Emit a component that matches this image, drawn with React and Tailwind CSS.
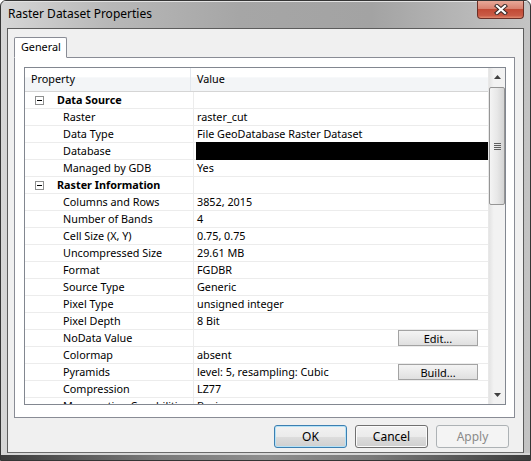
import React from 'react'

const rows = [
  { cat: 'Data Source' },
  { name: 'Raster', value: 'raster_cut' },
  { name: 'Data Type', value: 'File GeoDatabase Raster Dataset' },
  { name: 'Database', hidden: true },
  { name: 'Managed by GDB', value: 'Yes' },
  { cat: 'Raster Information' },
  { name: 'Columns and Rows', value: '3852, 2015' },
  { name: 'Number of Bands', value: '4' },
  { name: 'Cell Size (X, Y)', value: '0.75, 0.75' },
  { name: 'Uncompressed Size', value: '29.61 MB' },
  { name: 'Format', value: 'FGDBR' },
  { name: 'Source Type', value: 'Generic' },
  { name: 'Pixel Type', value: 'unsigned integer' },
  { name: 'Pixel Depth', value: '8 Bit' },
  { name: 'NoData Value', value: '', button: 'Edit...' },
  { name: 'Colormap', value: 'absent' },
  { name: 'Pyramids', value: 'level: 5, resampling: Cubic', button: 'Build...' },
  { name: 'Compression', value: 'LZ77' },
  { name: 'Mensuration Capabilities', value: 'Basic' },
]

const CloseGlyph = () => (
  <svg width="14" height="11" viewBox="0 0 14 11">
    <path d="M3 2 L11 9 M11 2 L3 9" stroke="#3a2a28" strokeWidth="4.2" strokeLinecap="square" />
    <path d="M3 2 L11 9 M11 2 L3 9" stroke="#ffffff" strokeWidth="2.2" strokeLinecap="square" />
  </svg>
)

const Row = ({ row }) => {
  if (row.cat) {
    return (
      <div className="flex shrink-0 h-[17px] border-b border-[#ececec]">
        <div className="w-[169px] flex items-center border-r border-[#ececec]">
          {/* expand box */}
          <div className="ml-[10px] w-[9px] h-[9px] border border-[#8e8f8f] flex items-center justify-center">
            <div className="w-[5px] h-px bg-[#000]" />
          </div>
          <span className="ml-[13px] font-bold leading-none">{row.cat}</span>
        </div>
        <div className="flex-1" />
      </div>
    )
  }
  return (
    <div className="flex shrink-0 h-[17px] border-b border-[#ececec]">
      <div className="w-[169px] flex items-center pl-[38px] border-r border-[#ececec] whitespace-nowrap overflow-hidden">
        <span className="leading-none">{row.name}</span>
      </div>
      <div className="flex-1 flex items-center pl-[3px] relative">
        {row.hidden ? (
          <div className="absolute left-[2px] right-0 top-[-1px] h-[18px] bg-black" />
        ) : (
          <span className="leading-none">{row.value}</span>
        )}
        {row.button && (
          <button className="ml-auto mr-[10px] w-[80px] h-[16px] self-start border border-[#a3a3a3] bg-gradient-to-b from-[#f4f4f4] to-[#e0e0e0] text-[11px] leading-none">
            {row.button}
          </button>
        )}
      </div>
    </div>
  )
}

const DlgButton = ({ children, variant }) => {
  const cls =
    variant === 'default'
      ? 'border-[#3c7fb1] shadow-[inset_0_0_0_1px_#b5e2f7] text-black'
      : variant === 'disabled'
      ? 'border-[#adb2b5] text-[#8a8a8a]'
      : 'border-[#707070] shadow-[inset_0_0_0_1px_#fbfbfb] text-black'
  return (
    <button
      className={`w-[73px] h-[23px] rounded-[3px] border text-[12px] leading-none ${cls} ${
        variant === 'disabled'
          ? 'bg-[#f4f4f4]'
          : 'bg-[linear-gradient(to_bottom,#f2f2f2_0%,#ebebeb_50%,#dddddd_51%,#cfcfcf_100%)]'
      }`}
    >
      {children}
    </button>
  )
}

export default function App() {
  return (
    <div className="w-[531px] h-[461px] bg-white font-['Noto_Sans',sans-serif] text-[10.8px] text-black">
      <div className="w-full h-full border border-[#353535] rounded-t-[6px] overflow-hidden flex flex-col bg-[linear-gradient(to_right,#d6d6d6_0%,#b8b8b8_20%,#a6a6a6_45%,#a3a3a3_70%,#bcbcbc_92%,#c4c4c4_100%)]">
        {/* title bar */}
        <div className="h-[27px] flex items-start border-t border-[#e2e2e2] shrink-0">
          <span className="ml-[7px] mt-[6px] text-[12px] leading-none text-black">Raster Dataset Properties</span>
          <div className="ml-auto mr-[6px] -mt-px w-[47px] h-[18px] rounded-b-[4px] border border-[#6b2f26] border-t-0 flex items-center justify-center bg-[linear-gradient(to_bottom,#e8a898_0%,#d98270_45%,#c24a35_50%,#c95a45_85%,#e08a70_100%)]">
            <CloseGlyph />
          </div>
        </div>

        {/* frame + client */}
        <div className="flex-1 flex px-[6px] min-h-0">
          <div className="flex-1 border border-[#5c5c5c] border-b-[#6a6a6a] bg-[#f0f0f0] flex flex-col">
            {/* tab strip */}
            <div className="flex pl-[6px] pt-[8px] shrink-0">
              <div className="relative z-10 -mb-px h-[21px] w-[53px] border border-[#898c95] border-b-white rounded-t-[2px] bg-white flex items-center pl-[6px]">
                <span className="leading-none">General</span>
              </div>
            </div>
            {/* tab panel */}
            <div className="ml-[6px] mr-[8px] h-[361px] border border-[#898c95] bg-white pl-[9px] pt-[9px] pr-[8px] pb-[12px] shrink-0">
              {/* property grid */}
              <div className="w-full h-full border border-[#828790] flex bg-white">
                <div className="flex-1 flex flex-col overflow-hidden">
                  <div className="h-[24px] shrink-0 flex border-b border-[#d5d5d5] bg-[linear-gradient(to_bottom,#ffffff_0%,#ffffff_40%,#f3f5f7_42%,#f3f5f7_100%)]">
                    <div className="w-[166px] flex items-center pl-[6px] border-r border-[#e3e8ee]">
                      <span className="leading-none">Property</span>
                    </div>
                    <div className="flex-1 flex items-center pl-[6px] mr-[1px]">
                      <span className="leading-none">Value</span>
                    </div>
                  </div>
                  {rows.map((r, i) => (
                    <Row key={i} row={r} />
                  ))}
                </div>
                {/* vertical scrollbar */}
                <div className="w-[17px] shrink-0 flex flex-col bg-[linear-gradient(to_right,#e3e3e3,#f2f2f2_30%,#f2f2f2)] border-l border-[#e8e8e8]">
                  <div className="h-[18px] flex items-center justify-center">
                    <svg width="7" height="4" viewBox="0 0 7 4"><path d="M0 4 L3.5 0 L7 4 Z" fill="#404040" /></svg>
                  </div>
                  <div className="mt-[1px] h-[118px] rounded-[2px] border border-[#959595] bg-[linear-gradient(to_right,#f4f4f4,#e8e8e8_50%,#d4d4d4)] flex items-center justify-center">
                    <div className="flex flex-col gap-[1px]">
                      <div className="w-[7px] h-px bg-[#5f5f5f]" />
                      <div className="w-[7px] h-px bg-[#5f5f5f]" />
                      <div className="w-[7px] h-px bg-[#5f5f5f]" />
                      <div className="w-[7px] h-px bg-[#5f5f5f]" />
                    </div>
                  </div>
                  <div className="flex-1" />
                  <div className="h-[18px] flex items-center justify-center">
                    <svg width="7" height="4" viewBox="0 0 7 4"><path d="M0 0 L7 0 L3.5 4 Z" fill="#404040" /></svg>
                  </div>
                </div>
              </div>
            </div>
            {/* dialog buttons */}
            <div className="flex justify-end gap-[8px] pr-[14px] mt-[7px]">
              <DlgButton variant="default">OK</DlgButton>
              <DlgButton>Cancel</DlgButton>
              <DlgButton variant="disabled">Apply</DlgButton>
            </div>
          </div>
        </div>

        {/* bottom frame */}
        <div className="h-[7px] shrink-0 border-t-[2px] border-[#d6d6d6] bg-[linear-gradient(to_right,#3c3c3c_0%,#7a7a7a_30%,#8e8e8e_50%,#7a7a7a_70%,#3c3c3c_100%)]" />
      </div>
    </div>
  )
}
